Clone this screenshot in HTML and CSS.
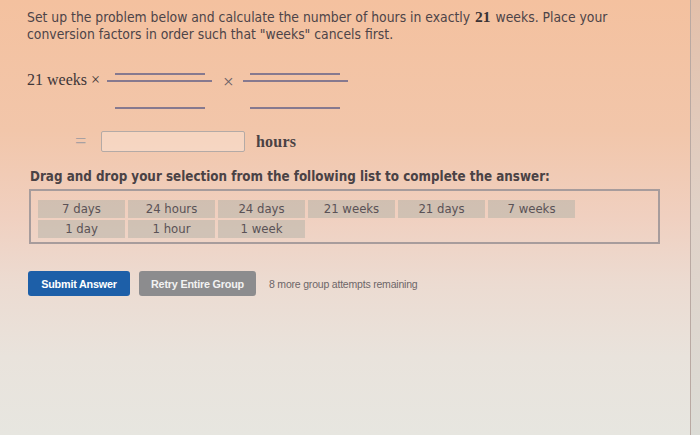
FILE: index.html
```html
<!DOCTYPE html>
<html>
<head>
<meta charset="utf-8">
<link rel="stylesheet" href="styles.css">
</head>
<body>
<div class="page">
  <div class="content">
    <p class="prompt">Set up the problem below and calculate the number of hours in exactly <b class="num21">21</b> weeks. Place your conversion factors in order such that "weeks" cancels first.</p>

    <div class="math-row">
      <span class="label">21 weeks ×</span>
      <div class="frac">
        <div class="slot num"></div>
        <div class="bar"></div>
        <div class="slot den"></div>
      </div>
      <span class="times">×</span>
      <div class="frac">
        <div class="slot num"></div>
        <div class="bar"></div>
        <div class="slot den"></div>
      </div>
    </div>

    <div class="eq-row">
      <span class="eq">=</span>
      <div class="answer-box"></div>
      <span class="unit">hours</span>
    </div>

    <p class="drag-title">Drag and drop your selection from the following list to complete the answer:</p>

    <div class="pool">
      <div class="pool-row">
        <span class="chip">7 days</span>
        <span class="chip">24 hours</span>
        <span class="chip">24 days</span>
        <span class="chip">21 weeks</span>
        <span class="chip">21 days</span>
        <span class="chip">7 weeks</span>
      </div>
      <div class="pool-row">
        <span class="chip">1 day</span>
        <span class="chip">1 hour</span>
        <span class="chip">1 week</span>
      </div>
    </div>

    <div class="actions">
      <button class="btn btn-primary">Submit Answer</button>
      <button class="btn btn-secondary">Retry Entire Group</button>
      <span class="attempts">8 more group attempts remaining</span>
    </div>
  </div>
  <div class="edge"></div>
</div>
</body>
</html>
```

FILE: styles.css
```css
html, body {
  margin: 0;
  padding: 0;
  width: 700px;
  height: 435px;
  overflow: hidden;
}

.page {
  display: flex;
  width: 700px;
  height: 435px;
  background: linear-gradient(180deg, #f4c19f 0%, #f2c6aa 30%, #f0d0c0 50%, #ecdbd1 65%, #e9e3dc 82%, #e7e6e0 100%);
}

.content {
  width: 691px;
  padding: 8px 0 0 27px;
  box-sizing: border-box;
  border-right: 1px solid #b9a9a2;
  color: #4a4244;
}

.edge {
  flex: 1;
  background: linear-gradient(180deg, #e4c0aa 0%, #e0d2c8 50%, #dcdcd6 100%);
}

.prompt {
  margin: 0;
  font-family: "DejaVu Sans Condensed", "DejaVu Sans", sans-serif;
  font-size: 13.8px;
  line-height: 17px;
  color: #4d4448;
  width: 600px;
}

.num21 {
  display: inline-block;
  margin: 0 1px;
  font-family: "Liberation Serif", serif;
  font-size: 15.5px;
  line-height: 17px;
  color: #3a3234;
}

.math-row {
  display: flex;
  align-items: flex-start;
  margin-top: 23px;
  font-family: "Liberation Serif", "DejaVu Serif", serif;
  color: #3e3638;
}

.label {
  font-size: 16px;
  line-height: 20px;
  margin-top: 4px;
  margin-right: 7px;
}

.frac {
  display: flex;
  flex-direction: column;
  align-items: center;
  width: 105px;
}

.slot {
  width: 90px;
  border-bottom: 2px solid #86798f;
}

.num {
  height: 7px;
}

.den {
  height: 25px;
}

.bar {
  width: 105px;
  height: 2px;
  margin-top: 5px;
  background: #86798f;
}

.times {
  font-size: 19px;
  line-height: 20px;
  margin-top: 6px;
  margin-left: 11px;
  margin-right: 9px;
  color: #6a6066;
}

.eq-row {
  display: flex;
  align-items: center;
  margin-top: 22px;
  margin-left: 48px;
  font-family: "Liberation Serif", "DejaVu Serif", serif;
}

.eq {
  font-size: 20px;
  color: #a8a0a2;
  width: 26px;
  line-height: 21px;
}

.answer-box {
  width: 142px;
  height: 19px;
  border: 1px solid #b4aaa6;
  border-radius: 2px;
  background: rgba(255, 240, 232, 0.35);
}

.unit {
  margin-left: 11px;
  font-size: 16px;
  font-weight: bold;
  color: #4a4244;
  letter-spacing: 0.2px;
}

.drag-title {
  margin: 16px 0 0 3px;
  font-family: "DejaVu Sans Condensed", "DejaVu Sans", sans-serif;
  font-weight: bold;
  font-size: 13.3px;
  line-height: 17px;
  color: #4a4245;
}

.pool {
  margin: 4px 0 0 2px;
  width: 631px;
  height: 55px;
  box-sizing: border-box;
  border: 2px solid #a79c9c;
  padding: 9px 0 0 7px;
  display: flex;
  flex-direction: column;
  gap: 2px;
}

.pool-row {
  display: flex;
  gap: 3px;
}

.chip {
  width: 87px;
  height: 18px;
  line-height: 18px;
  text-align: center;
  background: rgba(165, 172, 162, 0.42);
  font-family: "DejaVu Sans Condensed", "DejaVu Sans", sans-serif;
  font-size: 13px;
  color: #5a5256;
}

.actions {
  display: flex;
  align-items: center;
  margin-top: 27px;
  margin-left: 1px;
}

.btn {
  height: 25px;
  border: none;
  border-radius: 3px;
  font-family: "Liberation Sans", Arial, sans-serif;
  font-weight: bold;
  font-size: 10.8px;
  letter-spacing: -0.2px;
  padding: 0;
  color: #ffffff;
}

.btn-primary {
  width: 102px;
  background: #1d5fa8;
}

.btn-secondary {
  width: 117px;
  margin-left: 9px;
  background: #8c8c8e;
  color: #f2f2f2;
}

.attempts {
  margin-left: 13px;
  font-family: "Liberation Sans", Arial, sans-serif;
  font-size: 10.5px;
  color: #6c6668;
  letter-spacing: -0.2px;
}
```
